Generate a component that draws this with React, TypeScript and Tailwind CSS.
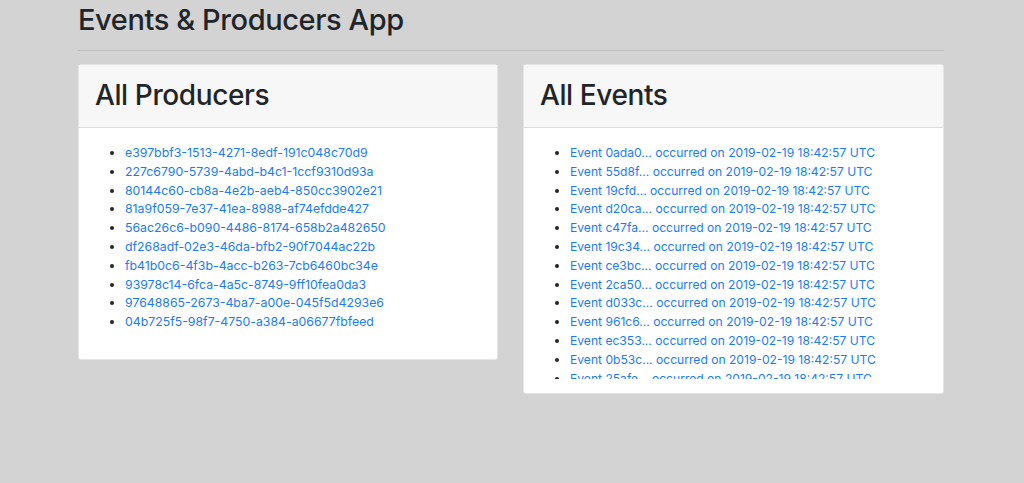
import React from 'react';

const producers = [
  'e397bbf3-1513-4271-8edf-191c048c70d9',
  '227c6790-5739-4abd-b4c1-1ccf9310d93a',
  '80144c60-cb8a-4e2b-aeb4-850cc3902e21',
  '81a9f059-7e37-41ea-8988-af74efdde427',
  '56ac26c6-b090-4486-8174-658b2a482650',
  'df268adf-02e3-46da-bfb2-90f7044ac22b',
  'fb41b0c6-4f3b-4acc-b263-7cb6460bc34e',
  '93978c14-6fca-4a5c-8749-9ff10fea0da3',
  '97648865-2673-4ba7-a00e-045f5d4293e6',
  '04b725f5-98f7-4750-a384-a06677fbfeed',
];

const events = [
  '0ada0', '55d8f', '19cfd', 'd20ca', 'c47fa', '19c34', 'ce3bc',
  '2ca50', 'd033c', '961c6', 'ec353', '0b53c', '25afe', '7b1d2',
];

export default function App() {
  return (
    <div className="min-h-[483px] bg-[#d3d3d3] text-[#212529] font-['Inter','Liberation_Sans',sans-serif]">
      <div className="w-[866px] ml-[78px]">
        {/* Header */}
        <h1 className="pt-[2px] text-[29px] leading-[36px] font-medium tracking-[-0.4px]">Events &amp; Producers App</h1>
        <hr className="mt-[12px] mb-[13px] border-t border-[#c2c2c2]" />

        <div className="flex items-start gap-[25px]">
          {/* Producers */}
          <div className="w-[420px] bg-white border border-black/10 rounded-[3px]">
            <div className="h-[63px] bg-[#f7f7f7] border-b border-black/10 flex items-center px-4 pb-[3px]">
              <h2 className="text-[28px] font-medium tracking-[-0.4px]">All Producers</h2>
            </div>
            <div className="pt-[16px] pb-[27px]">
              <ul className="list-disc pl-[46px] text-[12.3px] leading-[18.8px]">
                {producers.map((p) => (
                  <li key={p}>
                    <a className="text-[#1a7cf0]">{p}</a>
                  </li>
                ))}
              </ul>
            </div>
          </div>

          {/* Events */}
          <div className="w-[421px] bg-white border border-black/10 rounded-[3px]">
            <div className="h-[63px] bg-[#f7f7f7] border-b border-black/10 flex items-center px-4 pb-[3px]">
              <h2 className="text-[28px] font-medium tracking-[-0.4px]">All Events</h2>
            </div>
            <div className="pt-[16px] pb-[14px]">
              <div className="h-[235px] overflow-hidden">
                <ul className="list-disc pl-[46px] text-[12.1px] leading-[18.8px]">
                  {events.map((e) => (
                    <li key={e}>
                      <a className="text-[#1a7cf0]">Event {e}... occurred on 2019-02-19 18:42:57 UTC</a>
                    </li>
                  ))}
                </ul>
              </div>
            </div>
          </div>
        </div>
      </div>
    </div>
  );
}
